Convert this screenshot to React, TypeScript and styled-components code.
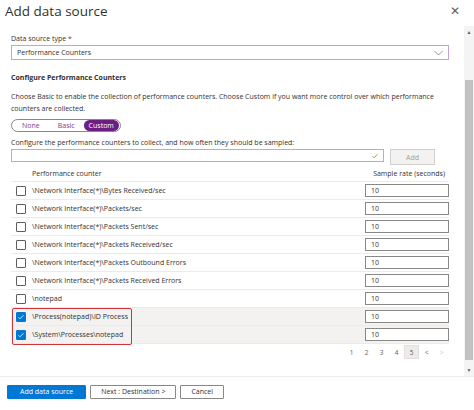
import React from "react";
import styled, { createGlobalStyle } from "styled-components";

const GlobalStyle = createGlobalStyle`
  html, body { margin: 0; padding: 0; background: #ffffff; }
  body { font-family: "Open Sans", "Noto Sans", sans-serif; color: #323130; }
  * { box-sizing: border-box; }
`;

const Panel = styled.div`
  width: 474px;
  height: 410px;
  display: flex;
  flex-direction: column;
  overflow: hidden;
`;

const Header = styled.div`
  height: 26px;
  display: flex;
  align-items: center;
  justify-content: space-between;
  padding: 0 14px 4px 5px;
`;

const Title = styled.h1`
  margin: 0;
  font-size: 13.5px;
  font-weight: 400;
  color: #323130;
`;

const Close = styled.span`
  font-size: 12px;
  color: #605e5c;
  line-height: 1;
`;

const ScrollArea = styled.div`
  height: 351px;
  display: flex;
  border-bottom: 1px solid #edebe9;
`;

const Content = styled.div`
  flex: 1;
  padding: 8px 15px 0 11px;
`;

const Label = styled.div`
  font-size: 7px;
  color: #323130;
  margin-bottom: 2px;
  span { color: #a4262c; }
`;

const Select = styled.div`
  height: 15px;
  border: 1px solid #c8a2d6;
  display: flex;
  align-items: center;
  justify-content: space-between;
  padding: 0 5px;
  font-size: 7px;
`;

const SectionTitle = styled.div`
  font-size: 7px;
  font-weight: 700;
  margin-top: 13px;
`;

const Description = styled.p`
  font-size: 7px;
  line-height: 12px;
  margin: 9px 0 4px;
  color: #323130;
`;

const Toggle = styled.div`
  display: flex;
  width: fit-content;
  align-items: center;
  height: 13px;
  border: 1px solid #8a8886;
  border-radius: 7px;
  padding: 0 1px 0 10px;
`;

const ToggleOption = styled.span<{ $active?: boolean; $space?: number }>`
  font-size: 7px;
  height: 11px;
  display: flex;
  align-items: center;
  padding: 0 ${(p) => (p.$active ? "5px" : "0")};
  margin-right: ${(p) => p.$space ?? 0}px;
  border-radius: 6px;
  color: ${(p) => (p.$active ? "#ffffff" : "#7a3b8f")};
  background: ${(p) => (p.$active ? "#6b1f85" : "transparent")};
`;

const Hint = styled.div`
  font-size: 7px;
  margin-top: 6px;
`;

const AddRow = styled.div`
  display: flex;
  gap: 6px;
  margin-top: 2px;
  height: 16px;
`;

const CounterInput = styled.div`
  width: 373px;
  height: 13px;
  border: 1px solid #c8a2d6;
  display: flex;
  align-items: center;
  justify-content: flex-end;
  padding-right: 4px;
`;

const AddButton = styled.div`
  width: 45px;
  height: 16px;
  border: 1px solid #d2d0ce;
  background: #f3f2f1;
  color: #a19f9d;
  font-size: 7px;
  display: flex;
  align-items: center;
  justify-content: center;
`;

const Table = styled.div``;

const HeadRow = styled.div`
  display: flex;
  justify-content: space-between;
  align-items: center;
  height: 17px;
  padding: 0 4px 0 21px;
  font-size: 7px;
  border-bottom: 1px solid #edebe9;
`;

const Row = styled.div<{ $selected?: boolean }>`
  display: flex;
  align-items: center;
  height: 18px;
  border-bottom: 1px solid #edebe9;
  background: ${(p) => (p.$selected ? "#f3f2f1" : "transparent")};
`;

const RowMain = styled.div`
  display: flex;
  align-items: center;
  gap: 6px;
  padding-left: 5px;
  flex: 1;
  font-size: 7px;
  color: #323130;
`;

const Box = styled.span<{ $checked?: boolean }>`
  width: 10px;
  height: 10px;
  border: 1px solid ${(p) => (p.$checked ? "#0078d4" : "#605e5c")};
  background: ${(p) => (p.$checked ? "#0078d4" : "#fff")};
  border-radius: 1px;
  display: flex;
  align-items: center;
  justify-content: center;
`;

const RateInput = styled.div`
  width: 84px;
  height: 13px;
  border: 1px solid #8a8886;
  background: #fff;
  font-size: 7px;
  display: flex;
  align-items: center;
  padding-left: 5px;
`;

const Highlight = styled.div`
  position: relative;
`;

const RedFrame = styled.div`
  position: absolute;
  left: 1px;
  top: 0;
  width: 120px;
  height: 37px;
  border: 1px solid #d13438;
  border-radius: 2px;
  pointer-events: none;
`;

const Pager = styled.div`
  display: flex;
  justify-content: flex-end;
  align-items: center;
  margin-top: 1px;
`;

const Page = styled.span<{ $current?: boolean; $dim?: boolean }>`
  width: 15px;
  height: 14px;
  display: flex;
  align-items: center;
  justify-content: center;
  font-size: 6.5px;
  color: ${(p) => (p.$dim ? "#c8c6c4" : "#605e5c")};
  background: ${(p) => (p.$current ? "#edebe9" : "transparent")};
  border: ${(p) => (p.$current ? "1px solid #e1dfdd" : "none")};
`;

const Scrollbar = styled.div`
  width: 10px;
  background: #f4f4f4;
  display: flex;
  flex-direction: column;
  align-items: center;
`;

const Arrow = styled.div`
  height: 12px;
  display: flex;
  align-items: center;
  justify-content: center;
  font-size: 5px;
  color: #606060;
`;

const Thumb = styled.div`
  width: 8px;
  height: 280px;
  margin-top: 42px;
  background: #c1c1c1;
`;

const Spacer = styled.div`
  flex: 1;
`;

const Footer = styled.div`
  flex: 1;
  display: flex;
  align-items: center;
  gap: 4px;
  padding: 0 0 4px 7px;
`;

const Button = styled.button<{ $primary?: boolean }>`
  height: 14px;
  font-family: inherit;
  font-size: 7px;
  padding: 0 ${(p) => (p.$primary ? "12px" : "10px")};
  border: 1px solid ${(p) => (p.$primary ? "#0078d4" : "#8a8886")};
  background: ${(p) => (p.$primary ? "#0078d4" : "#fff")};
  color: ${(p) => (p.$primary ? "#fff" : "#323130")};
  border-radius: 1px;
  display: flex;
  align-items: center;
`;

const Check = ({ color }: { color: string }) => (
  <svg width="8" height="8" viewBox="0 0 16 16">
    <path d="M3 8.5l3 3 7-7" fill="none" stroke={color} strokeWidth="1.6" />
  </svg>
);

const Chevron = () => (
  <svg width="9" height="6" viewBox="0 0 18 10">
    <path d="M1 1l8 8 8-8" fill="none" stroke="#605e5c" strokeWidth="1.3" />
  </svg>
);

const counters = [
  { name: "\\Network Interface(*)\\Bytes Received/sec", checked: false },
  { name: "\\Network Interface(*)\\Packets/sec", checked: false },
  { name: "\\Network Interface(*)\\Packets Sent/sec", checked: false },
  { name: "\\Network Interface(*)\\Packets Received/sec", checked: false },
  { name: "\\Network Interface(*)\\Packets Outbound Errors", checked: false },
  { name: "\\Network Interface(*)\\Packets Received Errors", checked: false },
  { name: "\\notepad", checked: false },
];

const selected = [
  "\\Process(notepad)\\ID Process",
  "\\System\\Processes\\notepad",
];

const CounterRow = ({ name, checked }: { name: string; checked: boolean }) => (
  <Row $selected={checked}>
    <RowMain>
      <Box $checked={checked}>{checked && <Check color="#fff" />}</Box>
      {name}
    </RowMain>
    <RateInput>10</RateInput>
  </Row>
);

export default function App() {
  return (
    <Panel>
      <GlobalStyle />
      <Header>
        <Title>Add data source</Title>
        <Close>✕</Close>
      </Header>
      <ScrollArea>
        <Content>
          <Label>
            Data source type <span>*</span>
          </Label>
          <Select>
            Performance Counters
            <Chevron />
          </Select>
          <SectionTitle>Configure Performance Counters</SectionTitle>
          <Description>
            Choose Basic to enable the collection of performance counters. Choose Custom if you want more control over
            which performance counters are collected.
          </Description>
          <Toggle>
            <ToggleOption $space={18}>None</ToggleOption>
            <ToggleOption $space={9}>Basic</ToggleOption>
            <ToggleOption $active>Custom</ToggleOption>
          </Toggle>
          <Hint>Configure the performance counters to collect, and how often they should be sampled:</Hint>
          <AddRow>
            <CounterInput>
              <Check color="#57a300" />
            </CounterInput>
            <AddButton>Add</AddButton>
          </AddRow>
          <Table>
            <HeadRow>
              <span>Performance counter</span>
              <span>Sample rate (seconds)</span>
            </HeadRow>
            {counters.map((c) => (
              <CounterRow key={c.name} name={c.name} checked={c.checked} />
            ))}
            <Highlight>
              {selected.map((name) => (
                <CounterRow key={name} name={name} checked />
              ))}
              <RedFrame />
            </Highlight>
          </Table>
          <Pager>
            <Page>1</Page>
            <Page>2</Page>
            <Page>3</Page>
            <Page>4</Page>
            <Page $current>5</Page>
            <Page>{"<"}</Page>
            <Page $dim>{">"}</Page>
          </Pager>
        </Content>
        <Scrollbar>
          <Arrow>▲</Arrow>
          <Thumb />
          <Spacer />
          <Arrow>▼</Arrow>
        </Scrollbar>
      </ScrollArea>
      <Footer>
        <Button $primary>Add data source</Button>
        <Button>Next : Destination &gt;</Button>
        <Button>Cancel</Button>
      </Footer>
    </Panel>
  );
}
